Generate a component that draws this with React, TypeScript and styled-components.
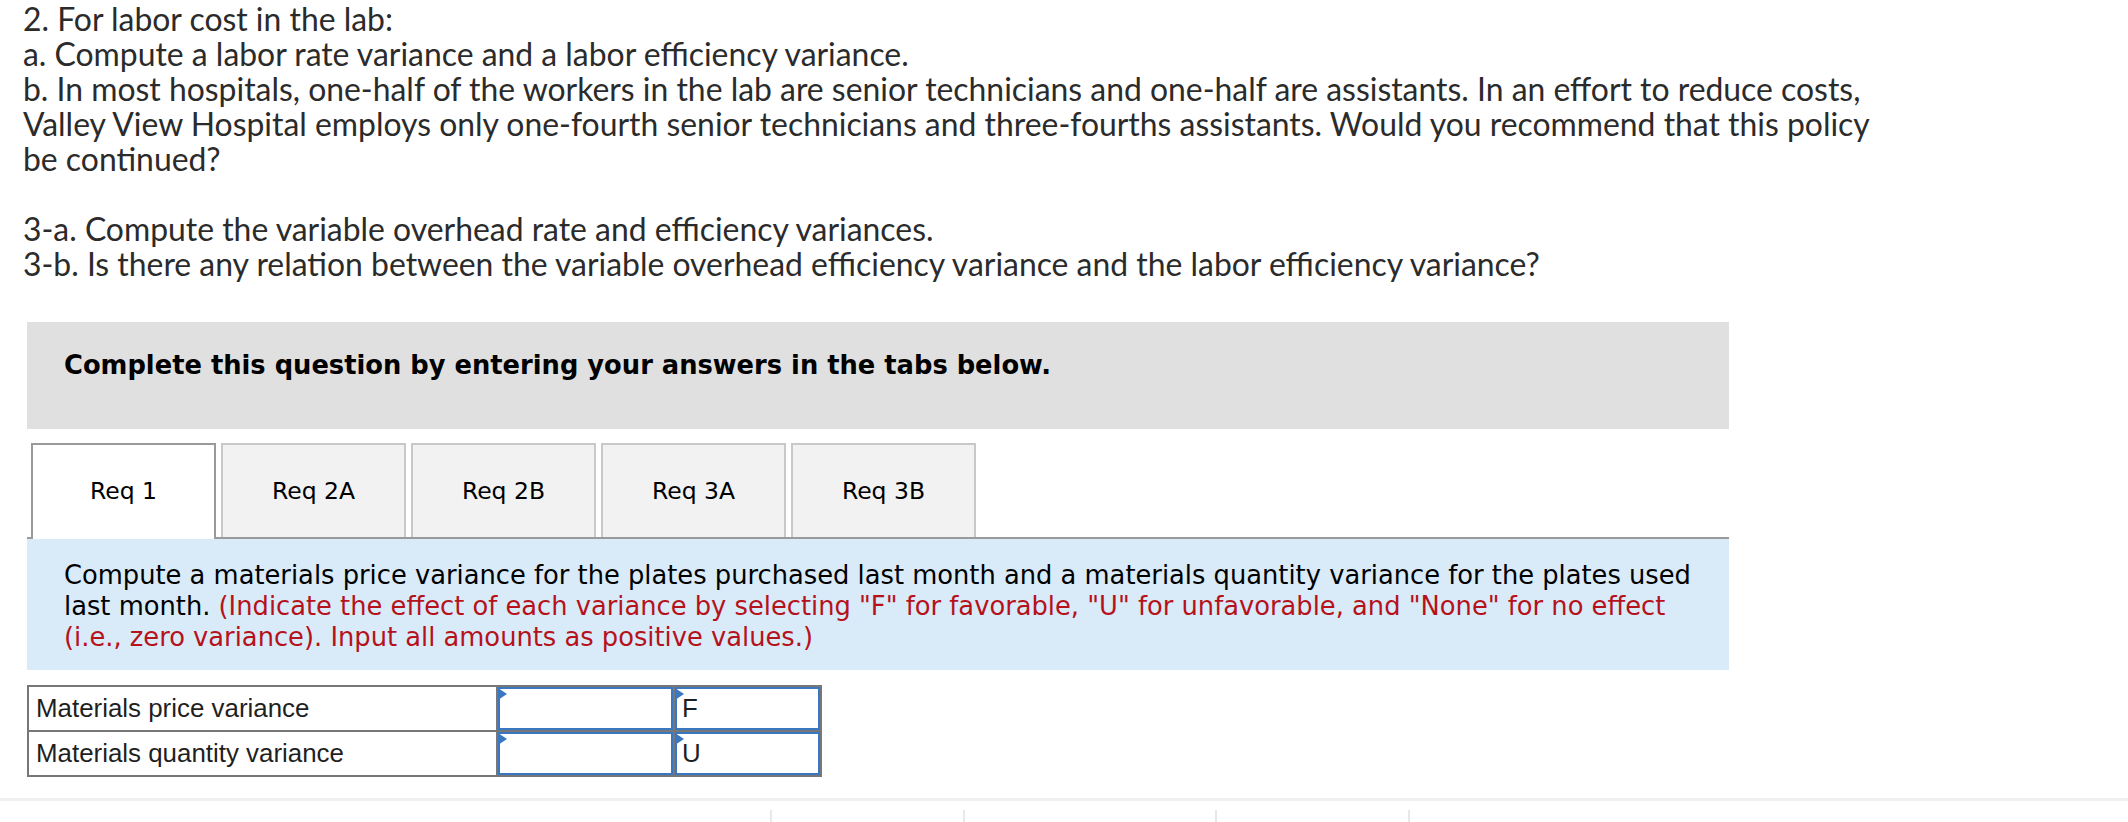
import React from "react";
import styled, { createGlobalStyle } from "styled-components";

const Global = createGlobalStyle`
  html, body { margin: 0; padding: 0; background: #ffffff; }
  body { font-family: "Lato", "Open Sans", sans-serif; }
  * { box-sizing: border-box; }
`;

const Page = styled.div`
  width: 2128px;
  min-height: 822px;
  overflow: hidden;
  display: flex;
  flex-direction: column;
`;

const Intro = styled.div`
  padding: 2px 0 0 23px;
  font-family: "Lato", "Open Sans", sans-serif;
  font-size: 31.9px;
  line-height: 35px;
  color: #2b2b2b;
  white-space: nowrap;
`;

const Question = styled.section`
  margin: 40px 0 0 27px;
  width: 1702px;
  display: flex;
  flex-direction: column;
`;

const Instruction = styled.div`
  background: #e0e0e0;
  height: 107px;
  padding: 28px 37px 0;
  font-family: "DejaVu Sans", Verdana, sans-serif;
  font-weight: bold;
  font-size: 25.75px;
  line-height: 31px;
  color: #000;
`;

const TabList = styled.div`
  margin-top: 14px;
  padding-left: 4px;
  display: flex;
  align-items: flex-end;
  gap: 5px;
  border-bottom: 2px solid #9a9a9a;
`;

const Tab = styled.div<{ $active?: boolean }>`
  width: 185px;
  height: ${(p) => (p.$active ? 96 : 94)}px;
  margin-bottom: ${(p) => (p.$active ? -2 : 0)}px;
  border: 2px solid ${(p) => (p.$active ? "#9a9a9a" : "#c8c8c8")};
  border-bottom: 0;
  background: ${(p) => (p.$active ? "#ffffff" : "#f2f2f2")};
  display: flex;
  align-items: center;
  justify-content: center;
  padding-bottom: ${(p) => (p.$active ? 2 : 0)}px;
  font-family: "DejaVu Sans", Verdana, sans-serif;
  font-size: 23.5px;
  color: #000;
  cursor: pointer;
`;

const Panel = styled.div`
  background: #d9eaf8;
  padding: 21px 20px 17px 37px;
  font-family: "DejaVu Sans", Verdana, sans-serif;
  font-size: 25.75px;
  line-height: 31px;
  color: #000;
  white-space: nowrap;
`;

const Note = styled.span`
  color: #b5121b;
`;

const AnswerGrid = styled.div`
  margin-top: 15px;
  width: 795px;
  display: grid;
  grid-template-columns: 467px 175px 145px;
  grid-auto-rows: 43px;
  gap: 2px;
  border: 2px solid #777777;
  background: #777777;
`;

const LabelCell = styled.div`
  background: #fff;
  display: flex;
  align-items: center;
  padding-left: 7px;
  font-family: "Liberation Sans", Arial, sans-serif;
  font-size: 25.9px;
  color: #1f1f1f;
  white-space: nowrap;
`;

const InputCell = styled.div`
  position: relative;
  background: #fff;
  border: 2px solid #3a77c3;
  display: flex;
  align-items: center;
  padding-left: 5px;
  font-family: "Liberation Sans", Arial, sans-serif;
  font-size: 25.9px;
  color: #1f1f1f;
`;

const Flag = styled.span`
  position: absolute;
  left: -2px;
  top: -1px;
  width: 0;
  height: 0;
  border-left: 9px solid #3a77c3;
  border-top: 6px solid transparent;
  border-bottom: 6px solid transparent;
`;

const Footer = styled.div`
  margin-top: 21px;
  border-top: 3px solid #efefef;
  padding: 9px 0 0 770px;
  display: flex;
  gap: 250px;
`;

const NavButton = styled.div`
  width: 195px;
  height: 40px;
  border-left: 2px solid #e8e8e8;
  border-right: 2px solid #e8e8e8;
`;

const tabs = ["Req 1", "Req 2A", "Req 2B", "Req 3A", "Req 3B"];

export default function App() {
  return (
    <>
      <Global />
      <Page>
        <Intro>
          2. For labor cost in the lab:
          <br />
          a. Compute a labor rate variance and a labor efficiency variance.
          <br />
          b. In most hospitals, one-half of the workers in the lab are senior technicians and one-half are assistants. In an effort to reduce costs,
          <br />
          Valley View Hospital employs only one-fourth senior technicians and three-fourths assistants. Would you recommend that this policy
          <br />
          be continued?
          <br />
          <br />
          3-a. Compute the variable overhead rate and efficiency variances.
          <br />
          3-b. Is there any relation between the variable overhead efficiency variance and the labor efficiency variance?
        </Intro>
        <Question>
          <Instruction>Complete this question by entering your answers in the tabs below.</Instruction>
          <TabList>
            {tabs.map((t, i) => (
              <Tab key={t} $active={i === 0}>
                {t}
              </Tab>
            ))}
          </TabList>
          <Panel>
            Compute a materials price variance for the plates purchased last month and a materials quantity variance for the plates used
            <br />
            last month.{" "}
            <Note>
              (Indicate the effect of each variance by selecting "F" for favorable, "U" for unfavorable, and "None" for no effect
              <br />
              (i.e., zero variance). Input all amounts as positive values.)
            </Note>
          </Panel>
          <AnswerGrid>
            <LabelCell>Materials price variance</LabelCell>
            <InputCell>
              <Flag />
            </InputCell>
            <InputCell>
              <Flag />F
            </InputCell>
            <LabelCell>Materials quantity variance</LabelCell>
            <InputCell>
              <Flag />
            </InputCell>
            <InputCell>
              <Flag />U
            </InputCell>
          </AnswerGrid>
        </Question>
        <Footer>
          <NavButton />
          <NavButton />
        </Footer>
      </Page>
    </>
  );
}
